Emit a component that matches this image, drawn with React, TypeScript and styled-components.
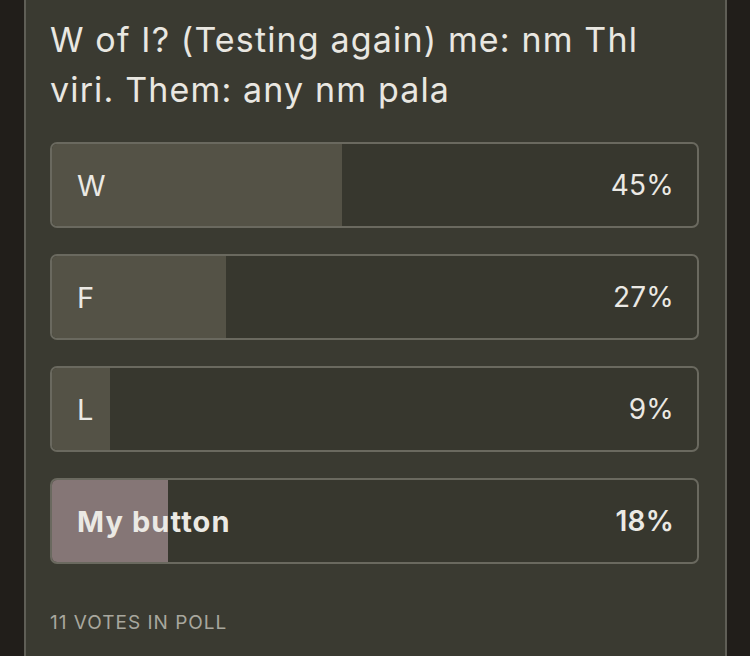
import React from "react"
import styled, { createGlobalStyle } from "styled-components"

const GlobalStyle = createGlobalStyle`
  html, body {
    margin: 0;
    padding: 0;
    background: #211e1a;
  }
  * {
    box-sizing: border-box;
  }
`

type Option = {
  label: string
  percent: number
  mine?: boolean
}

const options: Option[] = [
  { label: "W", percent: 45 },
  { label: "F", percent: 27 },
  { label: "L", percent: 9 },
  { label: "My button", percent: 18, mine: true },
]

const App = () => {
  return (
    <>
      <GlobalStyle />
      <Page>
        <Card>
          <Title>W of I? (Testing again) me: nm Thl viri. Them: any nm pala</Title>
          <Options>
            {options.map((o) => (
              <OptionRow key={o.label}>
                <Fill $mine={o.mine} style={{ width: `${o.percent}%` }} />
                <Label $mine={o.mine}>{o.label}</Label>
                <Percent $mine={o.mine}>{o.percent}%</Percent>
              </OptionRow>
            ))}
          </Options>
          <Footer>11 votes in poll</Footer>
        </Card>
      </Page>
    </>
  )
}

export default App

const Page = styled.div`
  width: 750px;
  height: 656px;
  overflow: hidden;
  background: #211e1a;
  padding: 0 23px 0 24px;
  font-family: Inter, "Noto Sans", sans-serif;
`
const Card = styled.div`
  height: 100%;
  background: #3a3a31;
  border-left: 2px solid #5f5e56;
  border-right: 2px solid #5f5e56;
  padding: 15px 26px 0 24px;
`
const Title = styled.h1`
  margin: 0;
  font-size: 34px;
  line-height: 50px;
  font-weight: 400;
  color: #e9e7e1;
  letter-spacing: 1.15px;
`
const Options = styled.div`
  margin-top: 27px;
  display: flex;
  flex-direction: column;
  gap: 26px;
`
const OptionRow = styled.div`
  position: relative;
  height: 86px;
  border: 2px solid #6a695f;
  border-radius: 7px;
  background: #37372e;
  overflow: hidden;
  display: flex;
  align-items: center;
  justify-content: space-between;
  padding: 0 23px 0 25px;
`
const Fill = styled.div<{ $mine?: boolean }>`
  position: absolute;
  left: 0;
  top: 0;
  bottom: 0;
  background: ${(p) => (p.$mine ? "#857676" : "#545246")};
`
const Label = styled.span<{ $mine?: boolean }>`
  position: relative;
  font-size: 29px;
  font-weight: ${(p) => (p.$mine ? 700 : 400)};
  letter-spacing: ${(p) => (p.$mine ? "1.1px" : "0.4px")};
  color: #ebe9e4;
`
const Percent = styled.span<{ $mine?: boolean }>`
  position: relative;
  font-size: 28px;
  font-weight: ${(p) => (p.$mine ? 600 : 400)};
  letter-spacing: 0.2px;
  color: #ebe9e4;
`
const Footer = styled.div`
  margin-top: 47px;
  font-size: 19px;
  letter-spacing: 1px;
  text-transform: uppercase;
  color: #a8a79e;
`
